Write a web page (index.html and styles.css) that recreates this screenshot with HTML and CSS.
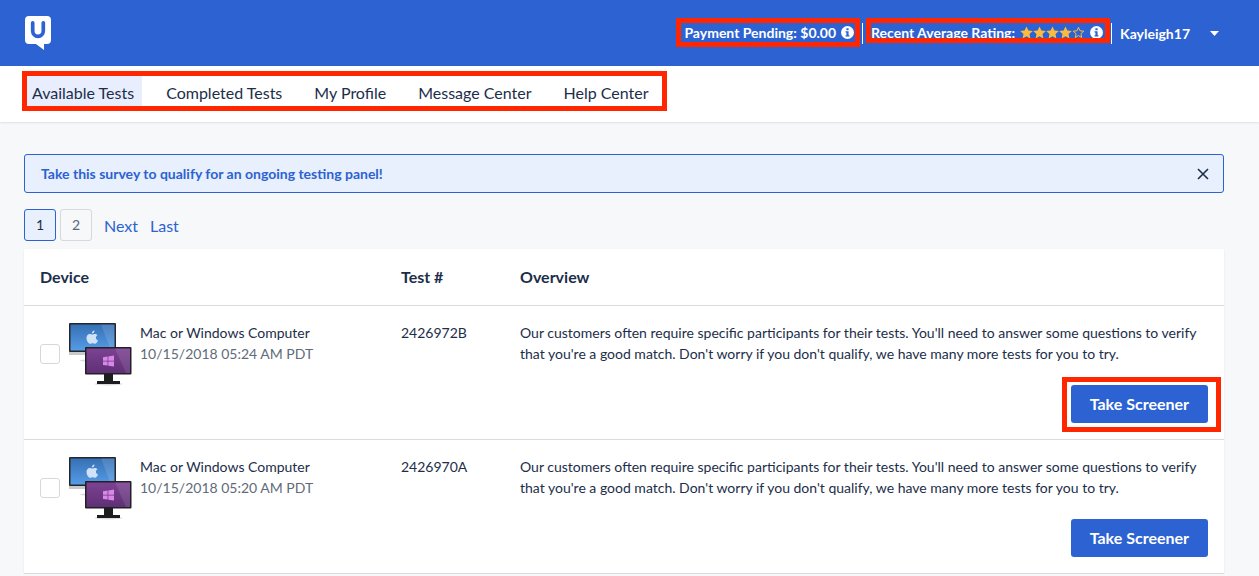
FILE: index.html
```html
<!DOCTYPE html>
<html lang="en">

<head>
    <meta charset="utf-8">
    <meta name="viewport" content="width=device-width, initial-scale=1.0">
    <title>Available Tests</title>
    <link rel="stylesheet" href="styles.css">
</head>

<body>
    <svg class="sprite" aria-hidden="true">
        <defs>
            <linearGradient id="mac-screen" x1="0" y1="0" x2="0" y2="1">
                <stop offset="0" stop-color="#3670b5" />
                <stop offset="1" stop-color="#559ce6" />
            </linearGradient>
            <linearGradient id="win-screen" x1="0" y1="0" x2="0" y2="1">
                <stop offset="0" stop-color="#7c4292" />
                <stop offset="1" stop-color="#5f3075" />
            </linearGradient>
        </defs>
        <symbol id="info" viewBox="0 0 12 12">
            <circle cx="6" cy="6" r="6" fill="#fff" />
            <path d="M5 2h2v2H5zM4.200 4.800H7v3.700h.8v1.300H4.200V8.500H5V6.100h-.8z" fill="#2c62d1" />
        </symbol>
        <symbol id="star" viewBox="0 0 13 13">
            <path d="M6.500.4l1.900 4.100 4.400.5-3.300 3 .9 4.500-3.900-2.300-3.900 2.300.9-4.500L.2 5l4.400-.5z" />
        </symbol>
        <symbol id="star-outline" viewBox="0 0 13 13">
            <path d="M6.500 1.300l1.500 3.500 3.800.4-2.900 2.500.8 3.800-3.200-1.900-3.200 1.900.8-3.800-2.900-2.500L5 4.800z" fill="none" stroke="#fdbb3d" />
        </symbol>
        <symbol id="computers" viewBox="0 0 64 64">
            <ellipse cx="19" cy="38.500" rx="7" ry="1" fill="#ddd" />
            <rect x="1" y="28" width="47" height="5" fill="#c9c9cb" />
            <rect x="1" y="1" width="47" height="29" rx="1" fill="#24262b" />
            <rect x="2.500" y="2.500" width="44" height="26" fill="url(#mac-screen)" />
            <path d="M33 2.500h13.500v26H43z" fill="#fff" opacity=".12" />
            <path d="M26.500 8.500c.2 1.700-1.200 3.100-2.700 3.100-.2-1.600 1.200-3 2.700-3.100zM24.300 12.500c.8 0 1.500-.6 2.600-.6 1 0 2 .5 2.600 1.400-2.300 1.400-1.900 4.300.5 5.200-.7 1.800-1.700 3.300-3 3.300-.9 0-1.300-.5-2.400-.5s-1.500.5-2.300.5c-1.900 0-4-3.700-3.800-6.400.2-2.300 1.700-3.500 3.300-3.500 1 0 1.800.6 2.500.6z" fill="#cfe2f8" />
            <ellipse cx="40.500" cy="62" rx="14" ry="1.500" fill="#ddd" />
            <path d="M36 51h9v8h7v3H29v-3h7z" fill="#1d1d1f" />
            <rect x="17" y="25" width="46.500" height="27.500" rx="1" fill="#222024" />
            <rect x="18.500" y="26.500" width="43.500" height="24.500" fill="url(#win-screen)" />
            <path d="M47 26.500h15V51h-4z" fill="#fff" opacity=".1" />
            <path d="M35 35.200l4.600-.7v4.200H35zM40.300 34.400l5.700-.9v5.200h-5.700zM35 39.400h4.600v4.200l-4.600-.7zM40.300 39.400H46v5.200l-5.700-.9z" fill="#d987e8" />
        </symbol>
    </svg>

    <header class="topbar">
        <div class="container topbar-inner">
            <a class="logo" href="#" aria-label="Home">
                <svg width="26" height="34" viewBox="0 0 26 34">
                    <path d="M4 0h18q4 0 4 4v20q0 4-4 4h-3v6l-8-6H4q-4 0-4-4V4q0-4 4-4z" fill="#fff" />
                    <path d="M7.700 6.800V14.800a5.300 5.600 0 0 0 10.600 0V6.800" fill="none" stroke="#2c62d1" stroke-width="3.700" stroke-linecap="round" />
                </svg>
            </a>
            <div class="account">
                <div class="stat">
                    <span class="marked marked-payment">Payment Pending: $0.00 <svg class="info"><use href="#info" /></svg></span>
                </div>
                <div class="stat">
                    <span class="marked marked-rating">Recent Average Rating:
                        <span class="stars" role="img" aria-label="4 of 5 stars">
                            <svg class="star"><use href="#star" /></svg>
                            <svg class="star"><use href="#star" /></svg>
                            <svg class="star"><use href="#star" /></svg>
                            <svg class="star"><use href="#star" /></svg>
                            <svg class="star"><use href="#star-outline" /></svg>
                        </span>
                        <svg class="info"><use href="#info" /></svg></span>
                </div>
                <button class="user" type="button">Kayleigh17
                    <svg width="9" height="5" viewBox="0 0 9 5"><path d="M0 0h9L4.500 5z" fill="#fff" /></svg>
                </button>
            </div>
        </div>
    </header>

    <nav class="menu">
        <div class="container">
            <div class="menu-items marked marked-menu">
                <a class="menu-item active" href="#">Available Tests</a>
                <a class="menu-item" href="#">Completed Tests</a>
                <a class="menu-item" href="#">My Profile</a>
                <a class="menu-item" href="#">Message Center</a>
                <a class="menu-item" href="#">Help Center</a>
            </div>
        </div>
    </nav>

    <main class="container">
        <div class="notice">
            <a href="#">Take this survey to qualify for an ongoing testing panel!</a>
            <button class="close" type="button" aria-label="Close">
                <svg width="12" height="12" viewBox="0 0 12 12"><path d="M1 1l10 10M11 1L1 11" stroke="#1c2e49" stroke-width="1.600" /></svg>
            </button>
        </div>

        <div class="pages">
            <a class="page current" href="#">1</a>
            <a class="page" href="#">2</a>
            <a class="page-link" href="#">Next</a>
            <a class="page-link" href="#">Last</a>
        </div>

        <table class="tests">
            <thead>
                <tr>
                    <th class="col-device">Device</th>
                    <th class="col-number">Test #</th>
                    <th>Overview</th>
                </tr>
            </thead>
            <tbody>
                <tr>
                    <td>
                        <div class="device">
                            <input type="checkbox" id="test-1">
                            <svg class="device-icon" aria-hidden="true"><use href="#computers" /></svg>
                            <label for="test-1">Mac or Windows Computer<br><span class="date">10/15/2018 05:24 AM PDT</span></label>
                        </div>
                    </td>
                    <td>2426972B</td>
                    <td>
                        <p class="overview">Our customers often require specific participants for their tests. You'll need to answer some questions to verify that you're a good match. Don't worry if you don't qualify, we have many more tests for you to try.</p>
                        <div class="actions"><span class="marked marked-button"><button class="screener" type="button">Take Screener</button></span></div>
                    </td>
                </tr>
                <tr>
                    <td>
                        <div class="device">
                            <input type="checkbox" id="test-2">
                            <svg class="device-icon" aria-hidden="true"><use href="#computers" /></svg>
                            <label for="test-2">Mac or Windows Computer<br><span class="date">10/15/2018 05:20 AM PDT</span></label>
                        </div>
                    </td>
                    <td>2426970A</td>
                    <td>
                        <p class="overview">Our customers often require specific participants for their tests. You'll need to answer some questions to verify that you're a good match. Don't worry if you don't qualify, we have many more tests for you to try.</p>
                        <div class="actions"><button class="screener" type="button">Take Screener</button></div>
                    </td>
                </tr>
            </tbody>
        </table>
    </main>
</body>

</html>
```
FILE: styles.css
```css
* {
    box-sizing: border-box;
}

body {
    margin: 0;
    background-color: #f6f8fa;
    color: #1c2e49;
    font-family: Lato, Roboto, sans-serif;
    font-size: 14px;
    line-height: 21px;
}

a {
    color: #2c62d1;
    text-decoration: none;
}

button {
    border: none;
    font-family: inherit;
    cursor: pointer;
}

.sprite {
    position: absolute;
    width: 0;
    height: 0;
}

.container {
    max-width: 1200px;
    margin: 0 24px;
}

/* red frames round the important parts */
.marked {
    position: relative;
}

.marked::after {
    content: "";
    position: absolute;
    border: 5px solid #ff2600;
    pointer-events: none;
}

.marked-payment::after {
    inset: -5px -6px -4px -8px;
}

.marked-rating::after {
    inset: -5px -7px 0 -5px;
}

.marked-menu::after {
    inset: -4px -10px 0 -2px;
}

.marked-button::after {
    inset: -8px -13px -9px -9px;
}

.topbar {
    background-color: #2c62d1;
    color: white;
}

.topbar-inner {
    display: flex;
    justify-content: space-between;
    align-items: center;
    height: 66px;
}

.logo {
    display: flex;
    padding-left: 1px;
}

.account {
    display: flex;
    align-items: center;
    font-weight: bold;
}

.stat {
    height: 21px;
    padding-right: 8px;
    margin-right: 8px;
    border-right: 1px solid white;
}

.stat .marked {
    display: flex;
    align-items: center;
    gap: 5px;
    height: 20px;
}

.info {
    width: 13px;
    height: 13px;
}

.stars {
    display: flex;
}

.star {
    width: 13px;
    height: 13px;
    fill: #fdbb3d;
}

.user {
    display: flex;
    align-items: center;
    gap: 20px;
    padding: 0 5px 0 0;
    background: none;
    color: white;
    font-size: 14px;
    font-weight: bold;
}

.menu {
    padding: 9px 0 11px;
    background-color: white;
    box-shadow: 0 1px 2px rgba(0, 0, 0, .1);
}

.menu-items {
    display: flex;
    gap: 16px;
    width: fit-content;
}

.menu-item {
    padding: 6px 8px;
    color: #1c2e49;
    font-size: 16px;
    line-height: 24px;
}

.menu-item.active {
    background-color: #e8eefd;
}

.notice {
    display: flex;
    justify-content: space-between;
    align-items: center;
    margin-top: 32px;
    padding: 8px 12px 8px 16px;
    border: 1px solid #2c62d1;
    border-radius: 3px;
    background-color: #e8effd;
    font-weight: bold;
}

.close {
    display: flex;
    padding: 2px;
    background: none;
}

.pages {
    display: flex;
    align-items: center;
    margin: 16px 0 8px;
}

.page {
    width: 32px;
    height: 32px;
    margin-right: 4px;
    border: 1px solid #d5d9dd;
    border-radius: 3px;
    color: #5a6777;
    line-height: 30px;
    text-align: center;
}

.page.current {
    border-color: #2c62d1;
    background-color: #e8effd;
    color: #1c2e49;
}

.page-link {
    margin-left: 8px;
    margin-right: 4px;
    font-size: 16px;
}

.tests {
    width: 100%;
    border-collapse: collapse;
    table-layout: fixed;
    background-color: white;
    box-shadow: 0 1px 2px rgba(0, 0, 0, .08);
}

.tests th {
    padding: 16px;
    font-size: 16px;
    line-height: 24px;
    text-align: left;
}

.tests td {
    padding: 16px;
    vertical-align: top;
}

.tests tr {
    border-bottom: 1px solid #d9dbde;
}

.col-device {
    width: 361px;
}

.col-number {
    width: 119px;
}

.device {
    display: flex;
    gap: 8px;
}

.device input {
    appearance: none;
    align-self: center;
    width: 20px;
    height: 20px;
    margin: 0;
    border: 1px solid #d5d9dd;
    border-radius: 3px;
    background-color: white;
}

.device input:checked {
    background-color: #2c62d1;
}

.device-icon {
    width: 64px;
    height: 64px;
}

.date {
    color: #5f6b7a;
}

.overview {
    margin: 0 0 21px;
}

.actions {
    display: flex;
    justify-content: flex-end;
}

.marked-button {
    display: flex;
}

.screener {
    padding: 7px 19px;
    border-radius: 3px;
    background-color: #2c62d1;
    color: white;
    font-size: 16px;
    font-weight: bold;
    line-height: 24px;
}
```
